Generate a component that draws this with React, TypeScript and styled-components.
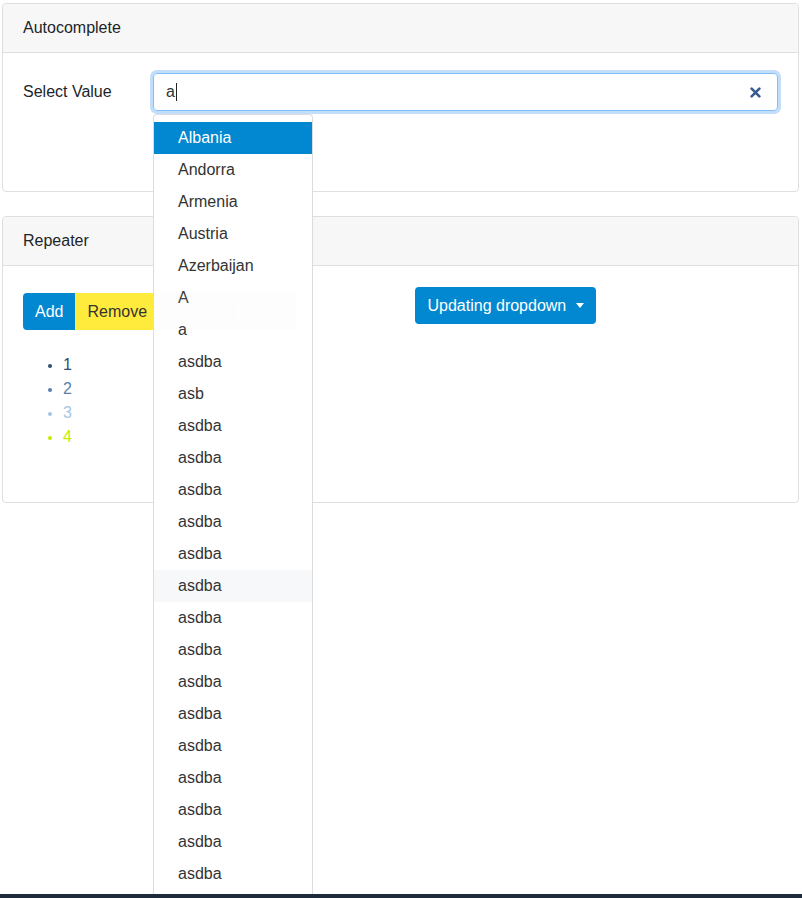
import React from 'react';
import styled, { createGlobalStyle } from 'styled-components';

const GlobalStyle = createGlobalStyle`
  body {
    margin: 0;
    padding: 0;
    background: #fff;
    font-family: "Liberation Sans", Arial, sans-serif;
    font-size: 16px;
    color: #212529;
  }
`;

const Page = styled.div`
  box-sizing: border-box;
  height: 100vh;
  padding: 3px 3px 0 2px;
  display: flex;
  flex-direction: column;
  gap: 24px;
`;

const Card = styled.div`
  border: 1px solid #dfdfdf;
  border-radius: 4px;
  background: #fff;
`;

const CardHeader = styled.div`
  background: #f7f7f7;
  border-bottom: 1px solid #dfdfdf;
  padding: 0 20px;
  height: 48px;
  line-height: 48px;
  border-radius: 4px 4px 0 0;
`;

const CardBody = styled.div<{ $minHeight: number }>`
  padding: 20px;
  min-height: ${(p) => p.$minHeight}px;
`;

const FieldRow = styled.div`
  display: grid;
  grid-template-columns: 130px 1fr;
  align-items: start;
`;

const Label = styled.label`
  line-height: 38px;
`;

const InputWrap = styled.div`
  position: relative;
`;

const Input = styled.div`
  height: 38px;
  box-sizing: border-box;
  border: 1px solid #80bdff;
  border-radius: 4px;
  box-shadow: 0 0 0 3px #c2defb;
  padding: 0 12px;
  display: flex;
  align-items: center;
  justify-content: space-between;
  color: #333;
`;

const Caret = styled.span`
  display: inline-block;
  width: 1px;
  height: 18px;
  background: #222;
  margin-left: 1px;
  vertical-align: middle;
`;

const ClearIcon = styled.svg`
  width: 11px;
  height: 11px;
  margin-right: 4px;
`;

/* the open list runs past the window; it is cut at the window's bottom edge */
const Menu = styled.ul`
  position: absolute;
  top: 41px;
  left: 0;
  width: 160px;
  height: 784px;
  overflow: hidden;
  box-sizing: border-box;
  margin: 0;
  padding: 7px 0 0;
  list-style: none;
  background: #fff;
  border: 1px solid #dcdcdc;
  border-bottom: none;
  border-radius: 4px 4px 0 0;
  z-index: 10;
`;

const MenuItem = styled.li<{ $active?: boolean; $hover?: boolean }>`
  height: 32px;
  line-height: 31px;
  padding: 0 24px;
  color: ${(p) => (p.$active ? '#fff' : '#333')};
  background: ${(p) => (p.$active ? '#0288d1' : p.$hover ? '#f7f8f9' : 'transparent')};
`;

const RepeaterGrid = styled.div`
  display: grid;
  grid-template-columns: 1fr 1fr;
  column-gap: 28px;
  padding-top: 1px;
`;

const ButtonGroup = styled.div`
  display: flex;
  margin-top: 6px;
`;

const Button = styled.button<{ $bg: string; $color: string }>`
  font: inherit;
  height: 37px;
  padding: 0 12px;
  border: none;
  background: ${(p) => p.$bg};
  color: ${(p) => p.$color};
  &:first-child {
    border-radius: 4px 0 0 4px;
  }
`;

const GhostButton = styled(Button)`
  position: relative;
  z-index: 20;
  opacity: 0.06;
  min-width: 137px;
  border-radius: 0 4px 4px 0;
`;

const DropButton = styled.button`
  font: inherit;
  height: 37px;
  padding: 0 12px 0 13px;
  border: none;
  border-radius: 4px;
  background: #0288d1;
  color: #fff;
  display: inline-flex;
  align-items: center;
  gap: 10px;
  &::after {
    content: '';
    border-top: 5px solid #fff;
    border-left: 4.5px solid transparent;
    border-right: 4.5px solid transparent;
  }
`;

const ItemList = styled.ul`
  margin: 23px 0 0;
  padding-left: 40px;
  line-height: 24px;
`;

const Item = styled.li<{ $color: string }>`
  color: ${(p) => p.$color};
  &::marker {
    font-size: 14px;
  }
`;

const Footer = styled.div`
  position: fixed;
  left: 0;
  right: 0;
  bottom: 0;
  height: 4px;
  background: #1d2b3a;
  z-index: 30;
`;

const countries = ['Albania', 'Andorra', 'Armenia', 'Austria', 'Azerbaijan', 'A', 'a', 'asdba', 'asb'];
const options = [...countries, ...Array(15).fill('asdba')];

const repeats = [
  { n: '1', c: '#2e4e74' },
  { n: '2', c: '#5a7fae' },
  { n: '3', c: '#a6c6e6' },
  { n: '4', c: '#c6ea00' },
];

export default function App() {
  return (
    <>
      <GlobalStyle />
      <Page>
        <Card>
          <CardHeader>Autocomplete</CardHeader>
          <CardBody $minHeight={98}>
            <FieldRow>
              <Label>Select Value</Label>
              <InputWrap>
                <Input>
                  <span>
                    a<Caret />
                  </span>
                  <ClearIcon viewBox="0 0 10 10">
                    <path d="M1.5 1.5 L8.5 8.5 M8.5 1.5 L1.5 8.5" stroke="#3a5b8f" strokeWidth="2.4" strokeLinecap="round" />
                  </ClearIcon>
                </Input>
                <Menu>
                  {options.map((o, i) => (
                    <MenuItem key={i} $active={i === 0} $hover={i === 14}>
                      {o}
                    </MenuItem>
                  ))}
                </Menu>
              </InputWrap>
            </FieldRow>
          </CardBody>
        </Card>
        <Card>
          <CardHeader>Repeater</CardHeader>
          <CardBody $minHeight={196}>
            <RepeaterGrid>
              <div>
                <ButtonGroup>
                  <Button $bg="#0288d1" $color="#fff">Add</Button>
                  <Button $bg="#ffeb3b" $color="#333">Remove</Button>
                  <GhostButton $bg="#e6e6e6" $color="#fff">Clear List</GhostButton>
                </ButtonGroup>
                <ItemList>
                  {repeats.map((r) => (
                    <Item key={r.n} $color={r.c}>{r.n}</Item>
                  ))}
                </ItemList>
              </div>
              <div>
                <DropButton>Updating dropdown</DropButton>
              </div>
            </RepeaterGrid>
          </CardBody>
        </Card>
      </Page>
      <Footer />
    </>
  );
}
